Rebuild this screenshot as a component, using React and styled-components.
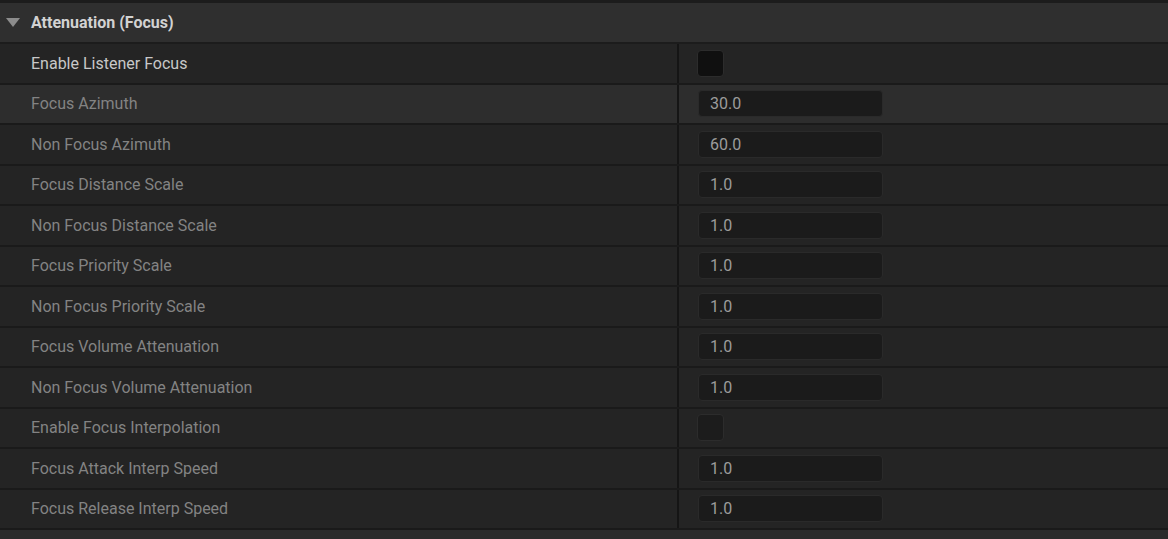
import React from "react";
import styled, { createGlobalStyle } from "styled-components";

const GlobalStyle = createGlobalStyle`
  html, body {
    margin: 0;
    padding: 0;
    background: #2b2b2b;
    font-family: Roboto, "Open Sans", "Liberation Sans", sans-serif;
  }
`;

const properties = [
  { name: "Enable Listener Focus", type: "check", enabled: true },
  { name: "Focus Azimuth", value: "30.0", hovered: true },
  { name: "Non Focus Azimuth", value: "60.0" },
  { name: "Focus Distance Scale", value: "1.0" },
  { name: "Non Focus Distance Scale", value: "1.0" },
  { name: "Focus Priority Scale", value: "1.0" },
  { name: "Non Focus Priority Scale", value: "1.0" },
  { name: "Focus Volume Attenuation", value: "1.0" },
  { name: "Non Focus Volume Attenuation", value: "1.0" },
  { name: "Enable Focus Interpolation", type: "check" },
  { name: "Focus Attack Interp Speed", value: "1.0" },
  { name: "Focus Release Interp Speed", value: "1.0" },
];

const App = () => {
  return (
    <React.Fragment>
      <GlobalStyle />
      <Panel>
        <Category>
          <Arrow viewBox="0 0 14 10">
            <path d="M0 0 L14 0 L7 9 Z" fill="#8c8c8c" />
          </Arrow>
          <CategoryTitle>Attenuation (Focus)</CategoryTitle>
        </Category>
        {properties.map((prop) => (
          <Row key={prop.name} hovered={prop.hovered}>
            <NameCell>
              <Label enabled={prop.enabled}>{prop.name}</Label>
            </NameCell>
            <ValueCell>
              {prop.type === "check" ? (
                <CheckBox enabled={prop.enabled} />
              ) : (
                <NumberBox>{prop.value}</NumberBox>
              )}
            </ValueCell>
          </Row>
        ))}
      </Panel>
    </React.Fragment>
  );
};

const Panel = styled.div`
  width: 1168px;
  height: 539px;
  background: #2b2b2b;
  border-top: 3px solid #1c1c1c;
  box-sizing: border-box;
  display: flex;
  flex-direction: column;
  overflow: hidden;
`;

const Category = styled.div`
  height: 39px;
  flex-shrink: 0;
  display: flex;
  align-items: center;
  background: #2f2f2f;
  border-bottom: 2px solid #1c1c1c;
`;

const Arrow = styled.svg`
  width: 14px;
  height: 10px;
  margin-left: 6px;
  margin-right: 11px;
`;

const CategoryTitle = styled.span`
  font-size: 16px;
  font-weight: 700;
  color: #d2d2d2;
`;

const Row = styled.div.withConfig({ shouldForwardProp: (p) => p !== "hovered" })`
  height: 38.5px;
  flex-shrink: 0;
  display: flex;
  background: ${(p) => (p.hovered ? "#2d2d2d" : "#242424")};
  border-bottom: 2px solid #1a1a1a;
`;

const NameCell = styled.div`
  width: 679px;
  flex-shrink: 0;
  display: flex;
  align-items: center;
  padding-left: 31px;
  box-sizing: border-box;
  border-right: 2px solid #151515;
`;

const Label = styled.span.withConfig({ shouldForwardProp: (p) => p !== "enabled" })`
  font-size: 16px;
  color: ${(p) => (p.enabled ? "#c8c8c8" : "#838383")};
`;

const ValueCell = styled.div`
  flex: 1;
  display: flex;
  align-items: center;
  padding-left: 19px;
`;

const NumberBox = styled.div`
  width: 185px;
  height: 27px;
  box-sizing: border-box;
  background: #1b1b1b;
  border: 1px solid #2a2a2a;
  border-radius: 4px;
  display: flex;
  align-items: center;
  padding-left: 11px;
  font-size: 16px;
  color: #9c9c9c;
`;

const CheckBox = styled.div.withConfig({ shouldForwardProp: (p) => p !== "enabled" })`
  width: 27px;
  height: 27px;
  margin-left: -1px;
  box-sizing: border-box;
  background: ${(p) => (p.enabled ? "#101010" : "#1c1c1c")};
  border: 1px solid #2c2c2c;
  border-radius: 4px;
`;

export default App;
